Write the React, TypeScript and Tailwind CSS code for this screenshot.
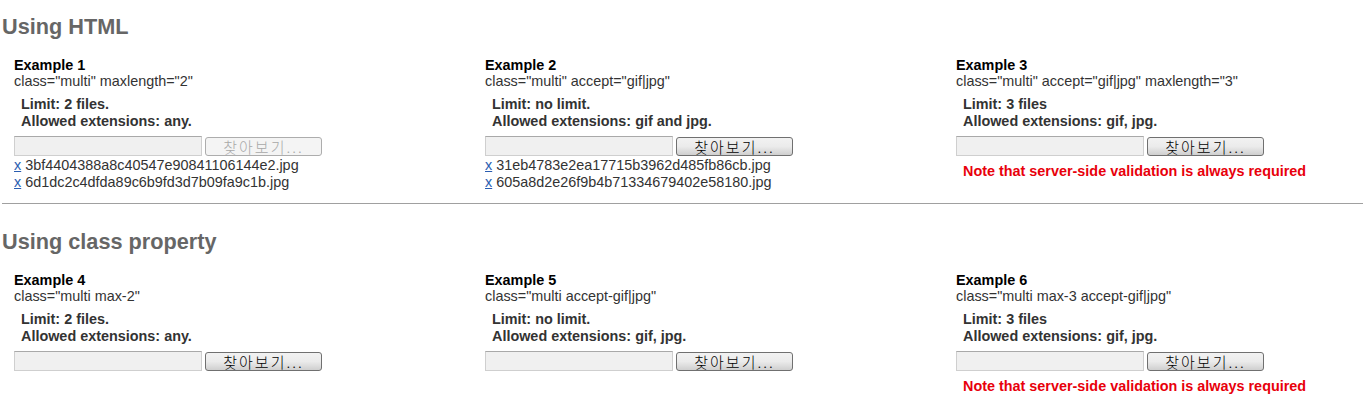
// multi-file upload demo page: two sections, three examples each.

type Example = {
  title: string;
  attrs: string;
  limit: string;
  exts: string;
  files?: string[];
  disabled?: boolean;
  note?: boolean;
};

const htmlExamples: Example[] = [
  {
    title: 'Example 1',
    attrs: 'class="multi" maxlength="2"',
    limit: 'Limit: 2 files.',
    exts: 'Allowed extensions: any.',
    files: ['3bf4404388a8c40547e90841106144e2.jpg', '6d1dc2c4dfda89c6b9fd3d7b09fa9c1b.jpg'],
    disabled: true,
  },
  {
    title: 'Example 2',
    attrs: 'class="multi" accept="gif|jpg"',
    limit: 'Limit: no limit.',
    exts: 'Allowed extensions: gif and jpg.',
    files: ['31eb4783e2ea17715b3962d485fb86cb.jpg', '605a8d2e26f9b4b71334679402e58180.jpg'],
  },
  {
    title: 'Example 3',
    attrs: 'class="multi" accept="gif|jpg" maxlength="3"',
    limit: 'Limit: 3 files',
    exts: 'Allowed extensions: gif, jpg.',
    note: true,
  },
];

const classExamples: Example[] = [
  {
    title: 'Example 4',
    attrs: 'class="multi max-2"',
    limit: 'Limit: 2 files.',
    exts: 'Allowed extensions: any.',
  },
  {
    title: 'Example 5',
    attrs: 'class="multi accept-gif|jpg"',
    limit: 'Limit: no limit.',
    exts: 'Allowed extensions: gif, jpg.',
  },
  {
    title: 'Example 6',
    attrs: 'class="multi max-3 accept-gif|jpg"',
    limit: 'Limit: 3 files',
    exts: 'Allowed extensions: gif, jpg.',
    note: true,
  },
];

// fake file input: grey text box + browse button
const FileInput = ({ disabled }: { disabled?: boolean }) => (
  <div className="flex items-center gap-[3px] h-[20px]">
    <div className="w-[188px] h-[20px] bg-[#f0f0f0] border border-[#cfcfcf] border-t-[#a9a9a9]" />
    <button
      type="button"
      disabled={disabled}
      className={
        disabled
          ? 'w-[117px] h-[19px] rounded-[3px] border border-[#adadad] bg-[#f4f4f4] text-[#a8a8a8] text-[15px] leading-[17px] tracking-[2px] font-light font-["Noto_Sans_CJK_KR",sans-serif]'
          : 'w-[117px] h-[19px] rounded-[3px] border border-[#707070] bg-gradient-to-b from-[#f2f2f2] via-[#ebebeb] to-[#cfcfcf] text-black text-[15px] leading-[17px] tracking-[2px] font-light font-["Noto_Sans_CJK_KR",sans-serif]'
      }
    >
      찾아보기...
    </button>
  </div>
);

const ExampleBox = ({ ex }: { ex: Example }) => (
  <div className="w-[471px] shrink-0">
    <div className="font-bold text-black leading-[16px]">{ex.title}</div>
    <div className="text-[#333] leading-[16px]">{ex.attrs}</div>
    <div className="pl-[7px] pt-[7px] font-bold text-[#333] leading-[17px]">
      <div>{ex.limit}</div>
      <div>{ex.exts}</div>
    </div>
    <div className="mt-[6px]">
      <FileInput disabled={ex.disabled} />
    </div>
    {ex.files && (
      <ul className="pt-[1px] leading-[17px] text-[#333]">
        {ex.files.map((f) => (
          <li key={f}>
            <a href="#" className="text-[#2a5db0] underline">x</a> {f}
          </li>
        ))}
      </ul>
    )}
    {ex.note && (
      <div className="mt-[7px] pl-[7px] font-bold text-[#e8000b] leading-[17px]">
        Note that server-side validation is always required
      </div>
    )}
  </div>
);

const Section = ({ title, items }: { title: string; items: Example[] }) => (
  <section>
    <h2 className="pl-[2px] text-[21.7px] leading-[24px] font-bold text-[#666]">{title}</h2>
    <div className="flex pl-[14px] pt-[18px]">
      {items.map((ex) => (
        <ExampleBox key={ex.title} ex={ex} />
      ))}
    </div>
  </section>
);

export default function App() {
  return (
    <div className='bg-white w-[1363px] h-[411px] overflow-hidden pt-[15px] text-[14.4px] font-["Liberation_Sans",Arial,sans-serif]'>
      <Section title="Using HTML" items={htmlExamples} />
      <hr className="ml-[2px] mt-[12px] mb-[26px] border-0 border-t border-[#a0a0a0]" />
      <Section title="Using class property" items={classExamples} />
    </div>
  );
}
